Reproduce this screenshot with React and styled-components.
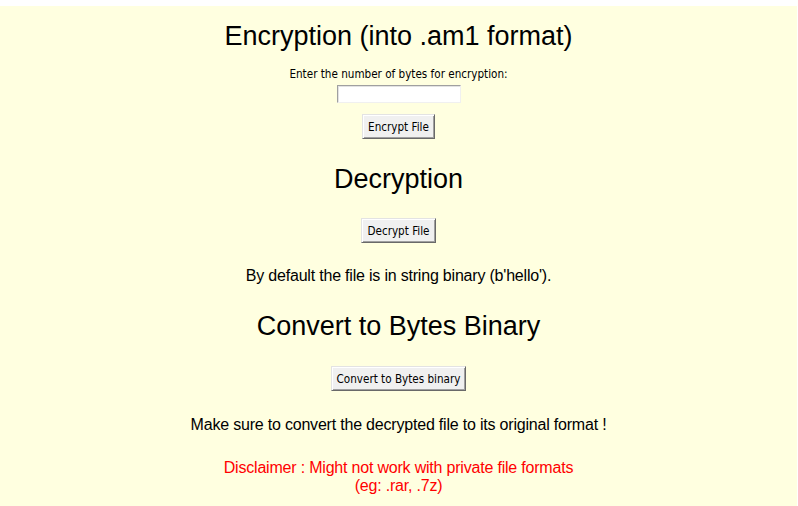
import styled, { createGlobalStyle } from 'styled-components';

const Global = createGlobalStyle`
    html, body {
        margin: 0;
        padding: 0;
        background: #ffffff;
    }
`;

const Window = styled.div`
    padding-top: 6px;
    background: #ffffff;
`;

const Panel = styled.main`
    width: 797px;
    height: 500px;
    box-sizing: border-box;
    padding-top: 15px;
    background: #ffffe0;
    display: flex;
    flex-direction: column;
    align-items: center;
    text-align: center;
    font-family: "Liberation Sans", Arial, sans-serif;
    color: #000000;
`;

const Heading = styled.h1`
    margin: ${p => p.$gap || 0}px 0 0;
    font-size: 27px;
    line-height: 31px;
    font-weight: 400;
`;

const Text = styled.p`
    margin: ${p => p.$gap || 0}px 0 0;
    font-size: 16px;
    line-height: 18px;
    letter-spacing: -0.2px;
    color: ${p => (p.$warn ? '#ff0000' : '#000000')};
`;

const Label = styled.label`
    display: block;
    margin-top: 16px;
    font-family: "DejaVu Sans Condensed", "DejaVu Sans", sans-serif;
    font-size: 11.6px;
    line-height: 13px;
`;

const Field = styled.input`
    margin-top: 4px;
    width: 124px;
    height: 18px;
    box-sizing: border-box;
    padding: 0 2px;
    border: 1px solid;
    border-color: #a0a0a0 #f0f0f0 #f0f0f0 #a0a0a0;
    box-shadow: inset 1px 1px 0 #e3e3e3;
    background: #ffffff;
    outline: none;
`;

const Button = styled.button`
    margin-top: ${p => p.$gap || 0}px;
    height: 25px;
    box-sizing: border-box;
    padding: 0 5px;
    border: 1px solid;
    border-color: #e3e3e3 #696969 #696969 #e3e3e3;
    box-shadow: inset 1px 1px 0 #ffffff, inset -1px -1px 0 #a0a0a0;
    background: #f0f0f0;
    font-family: "DejaVu Sans Condensed", "DejaVu Sans", sans-serif;
    font-size: 11.6px;
    color: #000000;
    cursor: pointer;
`;

export default function App() {
    return <>
        <Global />
        <Window>
            <Panel>
                <Heading>Encryption (into .am1 format)</Heading>
                <Label htmlFor="bytes">Enter the number of bytes for encryption:</Label>
                <Field id="bytes" type="text" />
                <Button $gap={11}>Encrypt File</Button>

                <Heading $gap={25}>Decryption</Heading>
                <Button $gap={23}>Decrypt File</Button>
                <Text $gap={24}>By default the file is in string binary (b'hello').</Text>

                <Heading $gap={26}>Convert to Bytes Binary</Heading>
                <Button $gap={24}>Convert to Bytes binary</Button>
                <Text $gap={25}>Make sure to convert the decrypted file to its original format !</Text>

                <Text $gap={25} $warn>
                    Disclaimer : Might not work with private file formats
                    <br />(eg: .rar, .7z)
                </Text>
            </Panel>
        </Window>
    </>;
}
